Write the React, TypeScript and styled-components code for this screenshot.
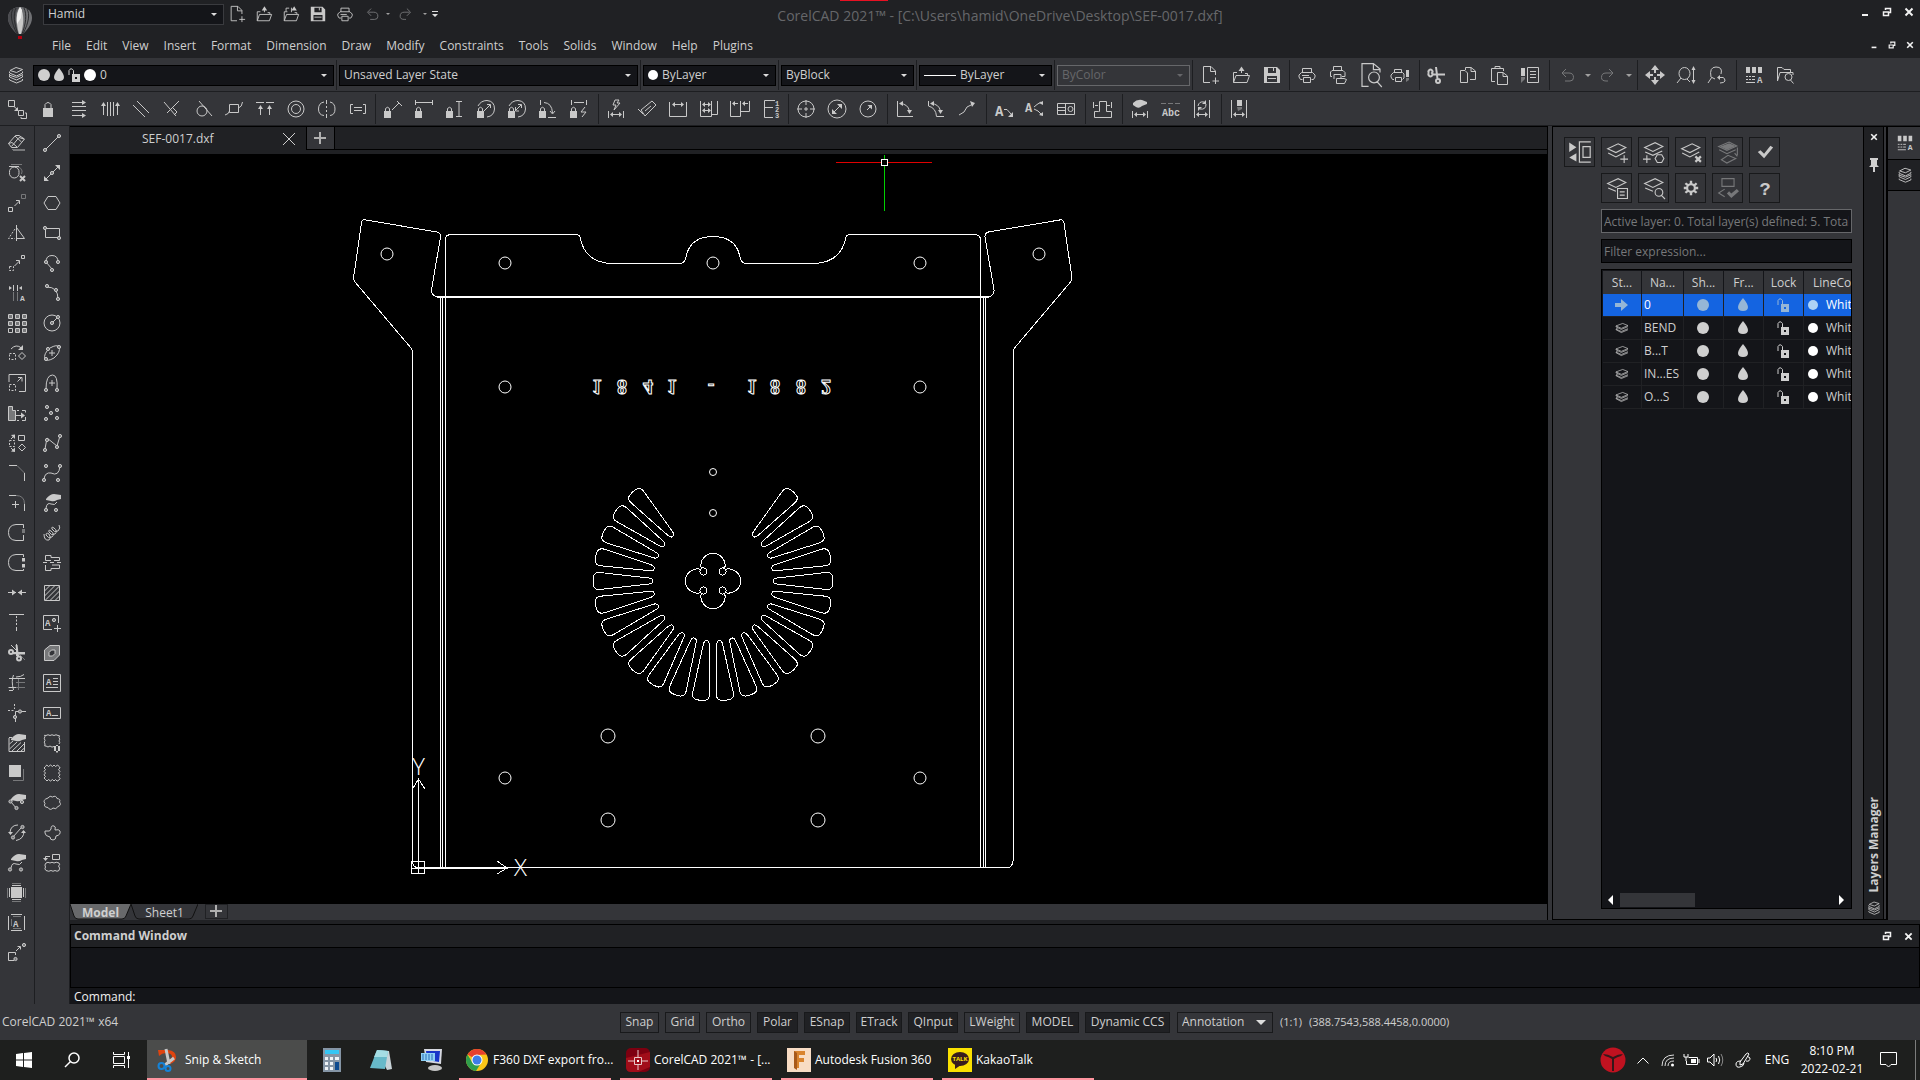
import React from "react";
import styled, { createGlobalStyle } from "styled-components";

const c = {
  dark: "#202124",
  bar: "#343539",
  field: "#141519",
  line: "#1d1e21",
  text: "#cfcfcf",
  dim: "#77787a",
  icon: "#c9c9c9",
  blue: "#1464e1",
};

const Global = createGlobalStyle`
  *, *::before, *::after { box-sizing: border-box; }
  html, body { margin: 0; background: ${c.dark}; }
  body, button, input, select, table {
    font-family: "Open Sans", "Noto Sans", sans-serif;
    font-size: 12px;
    line-height: 16px;
    color: ${c.text};
  }
  button { padding: 0; border: 0; background: none; cursor: default; }
  svg { display: block; flex: none; }
`;

/* ---------- icon set: 20 x 20 grid ---------- */

type Glyph = {
  d?: string; // light stroke
  w?: string; // heavy light stroke
  g?: string; // grey stroke
  f?: string; // light fill
  q?: string; // grey fill
  s?: string; // dashed stroke
  n?: number[][]; // nodes
  t?: [number, number, number, string][]; // letters
};

const HAND = "M4 6Q8 1 12 1L19 2V6L15 7Q12 9 9 8L4 7Z";
const LOCK = "M1 12H8V19H1Z";
const SHACKLE = "M2.5 12V9.5Q4.5 7 6.5 9.5V12";
const WAVY = "M3.5 3.5Q4.5 0.5 6.5 3.5Q8.5 0.5 10.5 3.5Q12 0.5 13.5 3.5Q16 0.5 17 3.5Q19.5 5 16.5 6.5Q19.5 8.5 16.5 10Q19.5 12 16.5 13.5Q19.5 16 17 17Q15 19.5 13.5 16.5Q12 19.5 10.5 16.5Q8.5 19.5 6.5 16.5Q5 19.5 3.5 16.5Q0.5 15 3.5 13.5Q0.5 12 3.5 10Q0.5 8.5 3.5 6.5Q0.5 5 3.5 3.5Z";
const PRINTER = "M5.5 7.5V3.5H14.5V7.5M5.5 14.5H3.5L2 12V10L4.5 7.5H15.5L18 10V12L16.5 14.5H14.5M6.5 12.5H13.5V17.5H6.5ZM5 10.5H12";
const STACK = "M4 5.5L10 2.5L16.5 4.5L10.5 7.5ZM3.500 6.500V8L10.5 11L16.5 8V6.5M3.500 10.500V12L10.5 15L16.5 12V10.5M3.500 14V15L10.5 18L16.5 15.5V14M4 9L3 10L10.500 12.500L17 9.500";
const NEWDOC = "M10 17.5H3.5V1.5H11L15.5 6V10M10.5 1.5V6.5H15.5M12.5 16H19M15.5 12.5V19";
const OPEN = "M2.5 17.5V7.5H6M2.5 17.5L5 10.5H18.5L16 17.5ZM16.5 10V8.5H14M10.5 8V3";
const UNDO = "M6 8H12Q16.5 8 16.5 12.5Q16.5 16 13 16H8";

const glyphs: Record<string, Glyph> = {
  erase: { d: "M1.5 10.5L8.5 2.5H12L17.500 6L10.5 14.5H4.5ZM4.5 13.5L12 4.500L17 6M1.500 10.500L5 9.500L10 14M8 3L14.500 9", g: "M5 16.5H18M6 17.5H18" },
  delDup: { d: "M12 9.5A4.8 4.8 0 1 1 2.5 9.5A4.8 4.8 0 1 1 12 9.5M2 3.5H12", g: "M4 1.5H15M8 4.5A4.8 4.8 0 0 1 14.5 11", w: "M13 13L18 18M18 13L13 18" },
  move: { d: "M1.5 14.5H5.5V18.5H1.5ZM7.5 13L12.5 8M9 7.5H12.5V11", g: "M14.5 1.5H18.5V5.5H14.5Z" },
  mirror: { d: "M9.5 2V18M9.5 4.5L17.5 15.5H9.5", s: "M8 6L1.5 15.5H8" },
  copy: { d: "M14.5 2.5H17.5V5.5H14.5ZM7.5 13L12.5 8M9 7.5H12.5V11", s: "M2.5 13.5H6.5V17.5H2.5Z" },
  space: { d: "M6.5 2V8M10.5 2V8", f: "M2 3L5 5L2 7ZM15 3L12 5L15 7Z", g: "M6.5 9V18M10.5 9V18", t: [[13, 18, 8, "A"]] },
  grid: { q: "M2 2H5V5H2ZM9 2H12V5H9ZM16 2H19V5H16ZM2 9H5V12H2ZM9 9H12V12H9ZM16 9H19V12H16ZM9 16H12V19H9ZM16 16H19V19H16Z", d: "M1.5 1.5H5.5V5.5H1.5ZM8.5 1.5H12.5V5.5H8.5ZM15.5 1.5H19.5V5.5H15.5ZM1.5 8.5H5.5V12.5H1.5ZM8.5 8.5H12.5V12.5H8.5ZM15.5 8.5H19.5V12.5H15.5ZM1.5 15.5H5.5V19.5H1.5ZM8.5 15.5H12.5V19.5H8.5ZM15.5 15.5H19.5V19.5H15.5Z" },
  rotate: { d: "M4 6Q9 0.5 14.5 5M15 9.5L18.5 13L15 16.5L11.5 13Z", f: "M16 2V7H11Z", s: "M2.5 10.5H8.5V16.5H2.5Z" },
  scale: { d: "M2 9V1.5H18.5V18.5H12M10.5 8.5L14.5 4.5M11 4.5H15V8.5", s: "M2.5 11.5H8.5V17.5H2.5Z" },
  stretch: { q: "M1.5 3.5H5.5V7.5H8.5V17.5H1.5Z", d: "M1.5 3.5H5.5V7.5H8.5V17.5H1.5ZM9 12.5H15M10 7.5H12M15 7.5H18.5V9.5M18.5 14V17.5H15M12 17.5H10", f: "M14 9.5L18 12.5L14 15.5Z" },
  transform: { d: "M11.5 2.5H17.5V7.5H11.5ZM15 11L18.5 14.5L15 18L11.5 14.5ZM4 6L7 3M4 15L7 18", f: "M8 1.5V6L4 2ZM8 19V14.5L4 18.5Z", s: "M2.5 7.5H7.5V13.5H2.5Z" },
  chamfer: { d: "M2 2.5H10M17.5 10V18", g: "M10 2.5L17.5 10" },
  fillet: { d: "M2 2.5H9M17.5 11V18M5 11.5H12M8.5 8V15", g: "M9 2.5Q17.5 2.5 17.5 11" },
  arcC: { d: "M16.5 5V1.5H9Q1.5 2 1.5 9.5Q1.5 17 9 17.5H16.5V12", q: "M15 6H18V10H15Z" },
  arcC2: { d: "M16.5 4V1.5H9Q1.5 2 1.5 9.5Q1.5 17 9 17.5H16.5V16", f: "M15 5H18V8.5H15ZM15 11H18V14.5H15Z" },
  join: { d: "M1 9.5H9M11 9.5H19", f: "M5 6.5L9 9.5L5 12.5ZM15 6.5L11 9.5L15 12.5Z" },
  tee: { d: "M2 1.5H17M9.5 14V18", s: "M9.5 3V13" },
  trim: { d: "M9.5 1V13M18 9.5H6M4 2L10 8", w: "M2 9A2 2 0 1 0 6 9A2 2 0 1 0 2 9M10 15.5A2 2 0 1 0 14 15.5A2 2 0 1 0 10 15.5M5 10L18 10.5M9.5 2L11 14", g: "M12 11L18 17" },
  power: { d: "M2 5.5H18M6.5 2Q4 8 6.5 17M1.5 14.5H9M2 17.5H6M9 4Q14 4 17 1.5", g: "M11.5 5V17M9 9.5H18M8 14.5H18" },
  corner: { d: "M8.5 19V8.5H19", s: "M1 7.5H7M7.5 1V6", n: [[13, 8.5], [8, 14]] },
  hatchEdit: { d: "M2 5V18.5H17.5V9M2.5 11L6 8M2.5 16L10 9M5 18L14 9.5M10 18L17 11M14 18L17.5 15M2 4.5H5", f: HAND },
  shadow: { f: "M2 2H14V14H2Z", g: "M16.5 6V17.5H6" },
  handPoly: { d: "M4 9L10 16M4 8L8 5", n: [[3.5, 8.5], [9.5, 15], [15, 9]], f: HAND },
  rotPoly: { d: "M3 9Q4 2 11 2M17 8Q17 16 9 17.5M6 14L14 5", n: [[6, 14.5], [15.5, 4]], f: "M1 9H6L3.5 12ZM14 10H19L16.5 7Z" },
  handSpl: { d: "M4 15Q5 9 9 11Q13 13 15 9", n: [[3, 16.5], [14, 16.5]], f: HAND },
  frontSq: { f: "M4 4H15V15H4Z", d: "M5 2.5H14M5 16.5H14M2.5 5V14M16.5 5V14", g: "M0.5 5V15M18.5 5V15M5 0.5H14M5 18.5H14" },
  frontA: { d: "M1.5 3V17M17.5 3V17M4 1.5H15M4 17.5H15", g: "M6 3.5H14M6 15.5H14M4.5 6V13", t: [[6, 14, 9, "A"]] },
  copyNode: { d: "M7 17.5H1.5V9.5H8.5V12M9 8L13 4M10.5 3.5H13.5V6.5", n: [[8.5, 16], [17, 2]] },
  line: { d: "M3 17L17 3", n: [[3, 17], [17, 3]] },
  ray: { d: "M3 17L17 3", f: "M18 2V7L13 2ZM2 18V13L7 18Z", n: [[10, 10]] },
  hexagon: { d: "M6 3.5H14L18 10L14 16.5H6L2 10Z" },
  rect: { d: "M3.5 5.5H17.5V14.5H3.5Z", n: [[3, 5], [17, 15]] },
  arc: { d: "M4 9Q4 2.5 10 2.5Q16 2.5 16 9M4 9L10 16", n: [[4, 9], [16, 9], [10, 17]] },
  arc3: { d: "M5 4Q16 4 16 16", n: [[5, 3], [14, 7], [16, 16]] },
  circle: { d: "M2 10A8 8 0 1 0 18 10A8 8 0 1 0 2 10M10 10L16 4", n: [[10, 10], [16, 4]] },
  ellipse: { d: "M3 16Q1 11 8 5Q15 1 17 4Q19 9 12 15Q5 19 3 16M10 7V13M7 10H13", n: [[4, 16], [17, 4], [6, 6]] },
  ellArc: { d: "M4 16Q4 2 10.5 2Q16 2 15 16M10 7V13M7 10H13", n: [[4, 17], [15, 17]] },
  points: { n: [[5, 4], [15, 7], [9, 10], [4, 16], [15, 15]] },
  poly: { d: "M3 16L5 5L15 13L18 3", n: [[3, 17], [5, 7], [15, 14], [18, 3]] },
  spline: { d: "M2 16Q3 9 9 10Q17 14 18 3", n: [[2, 17], [4, 3], [16, 17], [18, 3]] },
  handSp2: { d: "M4 15Q5 9 9 11Q13 13 15 9", n: [[4, 17], [14, 17]], f: HAND },
  spiral: { d: "M2 11Q2 18 7 17Q10 15 7 11Q4 9 4 12Q6 16 10 14Q13 11 9 8Q6 6 7 9Q9 13 13 11Q16 8 12 5Q9 3 10 6Q12 10 16 8Q19 5 17 2" },
  split: { d: "M9 7.5H3.5V2.5H9V4.5H17.5V7.5H12M3.5 12V17.5H9V15.5H17.5V12H10M1 9.5H5M8 9.5H12M15 9.5H19" },
  hatch: { d: "M2.5 2.5H17.5V17.5H2.5ZM2.5 8L8 2.5M2.5 13L13 2.5M3.5 17L17.5 3M8 17.5L17.5 8M13 17.5L17.5 13" },
  attr: { d: "M10 16.5H1.5V2.5H16.5V10M12 15.5H19M15.5 12V19", n: [[12, 7]], t: [[3, 13, 9, "A"]] },
  region: { q: "M2.5 17.5V7L8 2.5H17.5V12L12 17.5ZM7 13H10.500L13 10.500V7H9.500L7 9.500Z", d: "M2.5 17.5V7L8 2.5H17.5V12L12 17.5ZM7 13V9.5L9.5 7H13V10.5L10.5 13Z" },
  text: { d: "M1.5 1.5H18.5V18.5H1.5ZM11 5.5H16M11 8.5H16M11 11.5H16M4 14.5H16", t: [[4, 12, 9, "A"]] },
  textA: { d: "M1.5 4.5H18.5V15.5H1.5ZM10 12.5H16", t: [[4, 13, 9, "A"]] },
  cloudSet: { d: "M12 13.5Q10 15 8 13Q6 15 4 13Q2 14 3 11Q1.5 9 3 7.5Q1.5 5 3 3.5Q1.5 1.5 4 2.5Q6 1 8 2.5Q10 1 12 2.5Q14 1 16 2.5Q18.5 2 17 4.5Q18.5 6 17 8Q18.5 9.5 17 11", f: "M12 13H18V18H12ZM14 12H16V19.5H14Z" },
  cloudRect: { d: WAVY },
  cloudEll: { d: "M6 5Q8 2 10.5 4Q14 2 15 5.5Q19 6 17.5 9Q20 12 16 13.5Q14 17 11 15Q8 18 6 14.5Q1 14 3 10.5Q0 7 6 5Z" },
  cloudFree: { d: "M9 6Q9 2 12 3Q14 3 13 7Q17 6 18 8Q19 12 14 13Q14 17 11 17Q8 17 8 14Q3 13 3 10Q2 7 5 8Q8 9 9 6Z" },
  cloudCvt: { d: "M10.5 1.5H17.5V6.5H10.5ZM3.5 7V3.5H8M4 10Q6 8.5 8 10Q10 8.5 12 10Q14 8.5 17 10Q18.5 12 16.5 13Q18.5 15 17 17.5Q15 19 13 17.5Q11 19 9 17.5Q7 19 4 17.5Q2 16 3.5 14Q2 12 4 10Z", f: "M1 5H6L3.5 8Z" },
  /* constraint + dimension toolbar */
  coin: { d: "M1.5 1.5H7.5V7.5H1.5ZM11.5 11.5H16.5V16.5H11.5ZM18 14H19.5V19.5H14V18M7 7.5L11 11", f: "M11 8V12H7Z" },
  lock: { f: "M5 9H15V18H5Z", d: "M7 9V5.5Q10 1.5 13 5.5V9" },
  parH: { d: "M3 3.5H14M3 7.5H17M3 11.5H17M3 16.5H14", f: "M13 1L17 3.5L13 6ZM13 14L17 16.5L13 19Z" },
  parV: { d: "M3.5 6V16M7.5 3V17M10.5 3V17M13.5 3V17M17.5 6V16", f: "M1 7L3.5 3L6 7ZM15 7L17.5 3L20 7Z" },
  parallel: { d: "M2 6L14 18M6 2L18 14" },
  perp: { d: "M2 3L14 17M17 2L5 14M11 9L15 13L12 16" },
  tangent: { d: "M4 12A5 5 0 1 0 14 12A5 5 0 1 0 4 12M6 2L19 17" },
  smooth: { d: "M5.5 5.5H14.5V13.5H5.5ZM1 16Q5 15 5.5 12M14.5 9Q18 8 18.5 3" },
  vert: { d: "M1 3.5H9M11 3.5H19M5.5 7V16M14.5 7V16", f: "M3 10L5.5 6L8 10ZM12 10L14.5 6L17 10Z" },
  conc: { d: "M2 10A8 8 0 1 0 18 10A8 8 0 1 0 2 10M5.5 10A4.5 4.5 0 1 0 14.5 10A4.5 4.5 0 1 0 5.5 10" },
  sym: { d: "M9.5 1V5M9.5 7V9M9.5 11V13M9.5 15V19M7 3Q1.5 4 1.5 10Q1.5 16 7 16.5M13 3Q18 4 18 10Q18 16 13 16.5" },
  equal: { d: "M5 5.5H2.5V14.5H5M15 5.5H17.5V14.5H15M6 8.5H14M6 11.5H14" },
  dcAl: { f: LOCK, d: SHACKLE + "M9 11L16 4M14 2L19 7" },
  dcH: { f: LOCK, d: SHACKLE + "M1.5 1V6M18.5 1V6M2 3.5H18" },
  dcV: { f: LOCK, d: SHACKLE + "M11 2.5H17M11 17.5H17M14 3V17" },
  dcR: { f: LOCK, d: SHACKLE + "M2 7Q5 1.5 11 1.5Q18.5 2 18.5 10Q18 17 11 18M8 12L14 6M11 5.5H14.5V9" },
  dcD: { f: LOCK, d: SHACKLE + "M2 7Q5 1.5 11 1.5Q18.5 2 18.5 10Q18 17 11 18M9 11L14 6M11 5.5H14.5V9M8.5 8V12H12" },
  dcAn: { f: LOCK, d: SHACKLE + "M2.5 1V6M10 18.5H18M6 3.5Q14 4 14.5 14M12 12L14.5 15L17 12" },
  dcCv: { f: LOCK, d: SHACKLE + "M2.5 1V6M17.5 1V6M5 3.5H15M16 8L12 13H17L13 18", q: "" },
  smart: { d: "M2.5 12V19M17.5 12V19M5 15.5H15M9 1L7 6H10L8 11L14 4H11L13 1Z", f: "M7 13V18L4 15.5ZM13 13V18L16 15.5Z" },
  dAl: { d: "M4 11L15 2L19 6L8 17ZM8 12L14 7M1 10L6 15" },
  dLin: { d: "M1.5 3V17.5H18.5V3M5 5.5H15", f: "M7 3V8L4 5.5ZM13 3V8L16 5.5Z" },
  dBase: { d: "M1.5 2V17.5H12.5V2M12.5 15.5H18.5V2M4 5.5H10M4 11.5H10", f: "M6 3V8L3 5.5ZM9 3V8L12 5.5ZM6 9V14L3 11.5ZM9 9V14L12 11.5Z" },
  dCont: { d: "M0.5 2V17.5H10.5V2M10.5 12.5H19.5V2M3 4.5H8M13 4.5H18", f: "M5 2V7L2 4.5ZM15 2V7L12 4.5Z" },
  dOrd: { d: "M14 1.5H3.5V18.5H12M4 8.5H12", t: [[14, 7, 7, "1"], [14, 13, 7, "2"], [14, 19, 7, "3"]] },
  center: { d: "M2 10A8 8 0 1 0 18 10A8 8 0 1 0 2 10M10 1V6M10 14V19M1 10H6M14 10H19M10 8V12M8 10H12" },
  diam: { d: "M1 10A9 9 0 1 0 19 10A9 9 0 1 0 1 10M7 13L13 7", f: "M15 5V10L10 5ZM5 15V10L10 15Z" },
  radius: { d: "M2 10A8 8 0 1 0 18 10A8 8 0 1 0 2 10M9 11L13 7", f: "M14 6V10.5L9.5 6Z" },
  angle: { d: "M2.5 2V17.5H18M5 4.5Q13 5 14.5 12", f: "M8 2V7L4 4.5ZM12 11H17L14.5 15Z" },
  arcLen: { d: "M2.5 2V7Q10 9 10.5 17.5H18M5 4.5Q13 5 14.5 12", f: "M8 2V7L4 4.5ZM12 11H17L14.5 15Z" },
  jog: { d: "M2 16L7 13L10 8L16 5", f: "M13 2L18 4L15 8Z" },
  leader: { d: "M10 10.5H13L17 15", f: "M19 13V18H14Z", t: [[1, 17, 14, "A"]] },
  leader2: { d: "M9 8L12 5.5L16 3M9 10L13 12L16 15", f: "M18 2V6L14 4ZM18 17V13L14 16Z", t: [[0, 13, 12, "A"]] },
  tol: { d: "M1.5 4.5H18.5V15.5H1.5ZM9.5 4.5V15.5M2 8.5H9M2 11.5H9M12 10A2.5 2.5 0 1 0 17 10A2.5 2.5 0 1 0 12 10" },
  qdim: { d: "M0.5 3V9M18.5 3V9M5.5 12.5H1.5V18.5H18.5V12.5H13.5V2.5H6.5V12.5ZM2 6.5H5M14 6.5H17" },
  handDim: { f: "M3 4Q7 0 12 1L17 3V5L12 7Q9 10 6 8L3 6ZM7 13V18L4 15.5ZM13 13V18L16 15.5Z", d: "M2.5 12V19M17.5 12V19M5 15.5H15" },
  abc: { g: "M0 4.5H5M7 4.5H12M14 4.5H19", t: [[1, 17, 10, "Abc"]] },
  upd: { d: "M2.5 1V19M17.5 1V19M5 15.5H15M6 7Q7 2 12 3M14 5Q14 11 8 10", f: "M7 13V18L4 15.5ZM13 13V18L16 15.5ZM14 1V5H10ZM6 12V8H10Z" },
  brushDim: { d: "M2.5 1V19M17.5 1V19M5 15.5H15", f: "M8 1H13V7H8ZM7 13V18L4 15.5ZM13 13V18L16 15.5Z", q: "M8 8H13V10L9 12Z" },
  /* standard toolbar */
  layers: { d: STACK },
  newDoc: { d: NEWDOC },
  open: { d: OPEN, f: "M7.5 6L10.5 1.5L13.5 6Z" },
  open2: { d: OPEN + "M4.5 7V3.5H8", f: "M10.5 6L13.5 1.5L16.5 6Z" },
  save: { f: "M2 2H15L18 5V18H2ZM6 3V8H14V3ZM5 11V17H15V11Z", d: "M11.5 3V6M6 13.5H14" },
  print: { d: PRINTER },
  printB: { d: "M5.5 5.5V1.5H13.5V5.5M4 11.5H2.5V7L4 5.5H15L17 7.5V11.5H14M6 9.5H13V13M6 9.5V14M8.5 18.5V13.5H16L18.5 14.5L16.5 18.5Z" },
  preview: { d: "M8 19.5H2.5V0.5H12L17.5 5V8M12 0.5V5.5H17M8 12A4.5 4.5 0 1 0 17 12A4.5 4.5 0 1 0 8 12M15 15.5L19 20" },
  printBrush: { d: "M4.5 7.5V4.5H11.5V7.5M4 14.5H2.5L1 12V10L3.5 7.5H12.5L14 9V13L12.5 14.5M5.5 12.5H11.5V16.5H5.5Z", f: "M16 5H19V12H16Z", q: "M16 13H19V15L16 17Z" },
  cut: { w: "M9 2L10.5 14M18 9.5H5M2 8A2 2 0 1 0 5 8A2 2 0 1 0 2 8M9 16A2 2 0 1 0 13 16A2 2 0 1 0 9 16" },
  copyDoc: { d: "M7 17.5H2.5V5.5H7L9.5 8V17.5ZM7.5 5V2.5H13L17.5 6V14.5H12M13 2.5V6.5H17" },
  paste: { d: "M6 16.5H2.5V3.5H14.5V6M6 3V1.5H11V3M8.5 7.5H14L18.5 11V19.5H8.5ZM14 8V11.5H18" },
  brush: { f: "M1 3H5V11H1Z", q: "M1 12H5V14L1 18Z", d: "M7.5 2.5H18.5V17.5H7.5ZM10 6.5H16M10 9.5H16M10 12.5H16" },
  undo: { g: UNDO + "M9 4L5 8L9 12" },
  redo: { g: "M14 8H8Q3.5 8 3.5 12.5Q3.5 16 8 16H10M11 4L15 8L11 12" },
  pan: { f: "M10 0L14 5H11V8H9V5H6ZM10 20L14 15H11V12H9V15H6ZM0 10L5 6V9H8V11H5V14ZM20 10L15 6V9H12V11H15V14Z" },
  zoomDyn: { d: "M3 8.5A5.5 6 0 1 0 14 8.5A5.5 6 0 1 0 3 8.5M5 13L1 18M17.5 2V17M11 14L14 17", f: "M15.5 5L17.5 1L19.5 5ZM15.5 15L17.5 19L19.5 15Z" },
  zoomPrev: { d: "M4 12Q2 2 9 2Q16 2 14 9M5 12L1 18M5 12.5L8 14M12 12.5H16Q18 13 18 16Q17 18 13 18", f: "M13 10V15L10 12.5Z" },
  props: { f: "M2 2H6V8H2ZM8 2H12V8H8ZM14 2H18V8H14Z", d: "M2 11.5H4M5 11.5H7M8 11.5H11M2 14.5H4M5 14.5H7M8 14.500H11M2 17.5H11", t: [[13, 18, 9, "A"]] },
  folderZ: { d: "M2.5 16V2.5H7L9 4.5H15.5V7M2.5 16L5 7.5H18V10M10 12A3 3 0 1 0 17 12A3 3 0 1 0 10 12M15.5 15L18.5 18.5" },
  /* layer panel */
  collapse: { d: "M19 1.5H9.5V18.5H19M12.5 5.5H18.5V14.5H12.5Z", f: "M1 2L7 6L1 10ZM7 11V18L1 14.5Z" },
  layAdd: { d: "M1.5 7L11 2.5L18 6L9 10.5ZM2 11L9 14.5L17.5 10M13 16.5H20M16.5 13V20" },
  layAddO: { d: "M1.5 6L11 1.5L18 5L9 9.5ZM2 10L9 13L17.5 9M0 16.5H7M3.5 13V20M13 12.5H17L19 16L17 19.5H13L11 16Z" },
  layDel: { d: "M1.5 7L11 2.5L18 6L9 10.5ZM2 11L9 14.5L17.5 10", w: "M14 14L19 19M19 14L14 19" },
  layMerge: { g: "M1.5 5L11 1L18 4.5L9 8.5ZM2 8L9 11.5L17 8M4 17L10 13L17 16L9 20ZM18.5 6V13M16 11L18.5 14", q: "M3 5L11 2L17 4.5L9 8Z" },
  check: { f: "M2 10L5 8L9 12L16 3L19 5L9 17Z" },
  layList: { d: "M1.5 6L11 1.5L18 5L9 9.5ZM2 10L9 13M10.5 10.5H19.5V19.5H10.5ZM12.5 13.5H17M12.5 16.5H17" },
  layFind: { d: "M1.5 6L11 1.5L18 5L9 9.5ZM2 10L9 13M11 14A3.5 3.5 0 1 0 18 14A3.5 3.5 0 1 0 11 14M17 17L20 20" },
  layRow: { d: "M1.5 7L11 3.5L18.5 6.5L9 10.5ZM1.5 11.5L9 15L18.5 11M1.5 7V8.5L9 12L18.5 8M1.5 11.5L4 10M1.5 11.5V12.5L9 16.5L18.5 12.5" },
  gear: { f: "M8.5 1H11.5V4L14 5L16 3L18 5L15.500 7.500L16 8.500H19V11.500H16L15.500 13L18 15L16 17L13.500 15L11.500 16V19H8.500V16L6.500 15L4 17L2 15L4.500 13L4 11.500H1V8.500H4L4.500 7L2 5L4 3L6.500 5L8.500 4ZM10 6.500A3.500 3.500 0 1 0 10 13.500A3.500 3.500 0 1 0 10 6.500Z" },
  selCheck: { g: "M4.5 1.5H15.5V8.5H4.5ZM7 11L1.5 14.5L7 18", q: "M9 15L11 13L13 15L18 11L20 13L13 19Z" },
  help: { t: [[5, 16, 17, "?"]] },
};

const Letter = styled.text`
  font-family: "Liberation Mono", monospace;
  font-weight: 700;
`;

function Icon({ name, color = c.icon, size = 20 }: { name: string; color?: string; size?: number }) {
  const g = glyphs[name];
  return (
    <svg width={size} height={size} viewBox="0 0 20 20" fill="none" stroke={color} strokeWidth="1" overflow="visible" aria-hidden="true">
      {g.q && <path d={g.q} fill="#77787a" stroke="none" fillRule="evenodd" />}
      {g.g && <path d={g.g} stroke="#77787a" />}
      {g.s && <path d={g.s} strokeDasharray="2 1.5" />}
      {g.d && <path d={g.d} />}
      {g.w && <path d={g.w} strokeWidth="2" />}
      {g.f && <path d={g.f} fill={color} stroke="none" fillRule="evenodd" />}
      {g.n && g.n.map(([x, y], i) => <circle key={i} cx={x} cy={y} r="1.6" fill="#77787a" />)}
      {g.t && g.t.map(([x, y, s, str], i) => (
        <Letter key={i} x={x} y={y} fontSize={s} fill={color} stroke="none">{str}</Letter>
      ))}
    </svg>
  );
}

const Caret = ({ color = "#dddddd", w = 6 }: { color?: string; w?: number }) => (
  <svg width={w} height={w / 2} viewBox="0 0 6 3" aria-hidden="true"><path d="M0 0H6L3 3Z" fill={color} /></svg>
);

const Disc = ({ color, size = 12 }: { color: string; size?: number }) => (
  <svg width={size} height={size} viewBox="0 0 12 12" aria-hidden="true"><circle cx="6" cy="6" r="6" fill={color} /></svg>
);
const Drop = ({ color = "#cfcfcf" }) => (
  <svg width="10" height="14" viewBox="0 0 10 14" aria-hidden="true"><path d="M5 0Q10 6 10 9Q10 13 5 13Q0 13 0 9Q0 6 5 0Z" fill={color} /></svg>
);
const Unlock = ({ color = "#cfcfcf" }) => (
  <svg width="12" height="14" viewBox="0 0 12 14" aria-hidden="true">
    <path d="M1 7V2.5Q3 -1 5.5 2.5V6" fill="none" stroke={color} />
    <path d="M4 6H12V14H4ZM7 9V11H9V9Z" fill={color} fillRule="evenodd" />
  </svg>
);

const WinGlyph = ({ kind, size = 10 }: { kind: "min" | "restore" | "close"; size?: number }) => (
  <svg width={size} height={size} viewBox="0 0 10 10" fill="none" stroke="#f2f2f2" strokeWidth="2" aria-hidden="true">
    {kind === "min" && <path d="M2 8H8" />}
    {kind === "close" && <path d="M1.5 1.5L8.5 8.5M8.5 1.5L1.5 8.5" />}
    {kind === "restore" && <path d="M3.5 3V1.5H8.5V5.5H7M1.5 5H6.5V8.5H1.5Z" strokeWidth="1.5" />}
  </svg>
);

/* ---------- frame ---------- */

const Shell = styled.div`
  display: flex;
  flex-direction: column;
  min-height: 100vh;
  background: ${c.dark};
`;

const Header = styled.header`
  position: relative;
  display: flex;
  height: 58px;
`;
const TopMark = styled.span`
  position: absolute;
  top: 0;
  left: 840px;
  width: 48px;
  height: 1px;
  background: #e81123;
`;
const LogoBox = styled.div`
  width: 43px;
  padding: 6px 0 0 8px;
`;
const HeaderBody = styled.div`
  flex: 1;
  min-width: 0;
`;
const TitleRow = styled.div`
  display: grid;
  grid-template-columns: 1fr auto 1fr;
  height: 32px;
`;
const QuickBar = styled.div`
  display: flex;
  align-items: center;
  height: 28px;
`;
const Title = styled.h1`
  margin: 0 0 0 37px;
  font-size: 14px;
  line-height: 32px;
  font-weight: 400;
  color: #66676a;
  white-space: nowrap;
`;
const WinButtons = styled.div<{ $gap: number; $right?: number }>`
  display: flex;
  justify-content: flex-end;
  align-items: center;
  gap: ${p => p.$gap}px;
  height: 24px;
  margin-left: auto;
  padding-right: ${p => p.$right ?? 6}px;
`;
const MenuRow = styled.nav`
  display: flex;
  align-items: center;
  height: 26px;
  padding-left: 1px;
`;
const MenuItem = styled.button`
  padding: 2px 7px 0 8px;
  height: 24px;
`;

/* ---------- toolbars ---------- */

const Bar = styled.div<{ $h: number }>`
  display: flex;
  height: ${p => p.$h}px;
  background: ${c.bar};
  border-bottom: 1px solid ${c.line};
`;
const Group = styled.div<{ $first?: boolean; $tight?: boolean }>`
  display: flex;
  align-items: center;
  margin: 2px 0 1px;
  padding: 0 ${p => (p.$tight ? 1 : 3)}px 0 2px;
  border-left: ${p => (p.$first ? 0 : 1)}px solid ${c.line};
`;
const ToolButton = styled.button<{ $w?: number }>`
  display: flex;
  align-items: center;
  justify-content: flex-start;
  width: ${p => p.$w ?? 31}px;
  height: 30px;
  padding-left: ${p => (p.$w ? 4 : 5)}px;
`;
const CaretButton = styled.button`
  display: flex;
  align-items: center;
  justify-content: center;
  width: 10px;
  height: 30px;
`;
const ComboSlot = styled.div`
  display: flex;
  align-items: center;
  margin: 2px 0 1px;
  padding: 0 2px;
  border-right: 1px solid ${c.line};
`;
const Combo = styled.div<{ $w: number; $off?: boolean; $frame?: string }>`
  display: flex;
  align-items: center;
  gap: 4px;
  width: ${p => p.$w}px;
  height: 21px;
  padding: 0 6px 0 4px;
  background: ${p => (p.$off ? c.bar : c.field)};
  border: 1px solid ${p => p.$frame ?? (p.$off ? "#66676a" : "#000")};
`;
const Select = styled.select<{ $off?: boolean }>`
  flex: 1;
  min-width: 0;
  height: 18px;
  padding: 0;
  border: 0;
  background: transparent;
  appearance: none;
  opacity: 1;
  color: ${p => (p.$off ? "#66676a" : c.text)};
`;

const group2 = [
  ["coin", "lock", "parH", "parV", "parallel", "perp", "tangent", "smooth", "vert", "conc", "sym", "equal"],
  ["dcAl", "dcH", "dcV", "dcR", "dcD", "dcAn", "dcCv"],
  ["smart", "dAl", "dLin", "dBase", "dCont", "dOrd"],
  ["center", "diam", "radius"],
  ["angle", "arcLen", "jog"],
  ["leader", "leader2", "tol"],
  ["qdim"],
  ["handDim", "abc", "upd"],
  ["brushDim"],
];

const Tools = ({ names }: { names: string[] }) => (
  <>{names.map(n => <ToolButton key={n} aria-label={n}><Icon name={n} size={n === "preview" ? 24 : 20} /></ToolButton>)}</>
);

/* ---------- body ---------- */

const Main = styled.main`
  display: flex;
  flex: 1;
`;
const Rail = styled.div`
  width: 35px;
  padding: 2px 0 0 2px;
  background: ${c.bar};
  border-right: 1px solid ${c.line};
`;
const Work = styled.div`
  display: flex;
  flex-direction: column;
  flex: 1;
  min-width: 0;
`;
const Upper = styled.div`
  display: flex;
  flex: 1;
  min-height: 0;
`;
const Doc = styled.section`
  display: flex;
  flex-direction: column;
  flex: 1;
  min-width: 0;
  margin-right: 4px;
  border-right: 1px solid #000;
  box-shadow: 4px 0 0 ${c.bar};
`;
const DocTabs = styled.div`
  display: flex;
  height: 24px;
  border-top: 1px solid #000;
`;
const DocTab = styled.div`
  display: flex;
  align-items: center;
  justify-content: space-between;
  width: 236px;
  padding: 0 10px 0 72px;
`;
const AddDoc = styled.button`
  display: flex;
  align-items: center;
  justify-content: center;
  width: 29px;
  background: ${c.bar};
  border: solid #000;
  border-width: 0 1px 1px;
`;
const TabFill = styled.div`
  flex: 1;
  border-bottom: 1px solid #000;
`;
const Canvas = styled.div`
  flex: 1;
  margin-top: 4px;
  background: #000;
  overflow: hidden;
`;
const Drawing = styled.svg`
  width: 100%;
  height: 100%;
`;
const SheetTabs = styled.div`
  display: flex;
  height: 16px;
  background: ${c.bar};
`;
const SheetTab = styled.button<{ $on?: boolean; $w: number }>`
  position: relative;
  width: ${p => p.$w}px;
  height: 16px;
  padding-top: 1px;
  font-weight: ${p => (p.$on ? 700 : 400)};
  svg { position: absolute; inset: 0; width: 100%; height: 100%; }
  span { position: relative; }
`;
const AddSheet = styled.button`
  display: flex;
  align-items: center;
  justify-content: center;
  width: 23px;
  height: 15px;
  margin-left: 7px;
  border: 1px solid ${c.dark};
`;

const Command = styled.section`
  border-top: 4px solid ${c.dark};
  background: ${c.field};
`;
const CommandHead = styled.div`
  display: flex;
  align-items: center;
  height: 24px;
  padding-left: 3px;
  border: 1px solid #000;
  background: ${c.dark};
  font-weight: 700;
`;
const CommandLog = styled.div`
  height: 40px;
  border: solid #000;
  border-width: 0 1px 1px;
`;
const CommandLine = styled.label`
  display: flex;
  height: 16px;
  padding-left: 4px;
  line-height: 17px;
  color: #f0f0f0;
`;
const CommandInput = styled.input`
  flex: 1;
  border: 0;
  outline: 0;
  padding: 0 4px;
  background: transparent;
`;

/* ---------- layers panel ---------- */

const Panel = styled.aside`
  display: flex;
  border: 1px solid #000;
  background: ${c.bar};
`;
const PanelBody = styled.div`
  display: flex;
  gap: 6px;
  width: 310px;
  padding: 10px 11px;
`;
const PanelMain = styled.div`
  display: flex;
  flex-direction: column;
  gap: 6px;
  width: 251px;
`;
const ButtonRow = styled.div`
  display: flex;
  gap: 6px;
`;
const PanelButton = styled.button`
  display: flex;
  align-items: center;
  justify-content: center;
  width: 31px;
  height: 30px;
  border: 1px solid #18191b;
`;
const PanelField = styled.input<{ $frame: string }>`
  width: 100%;
  height: 24px;
  padding: 0 2px;
  border: 1px solid ${p => p.$frame};
  background: ${c.field};
  color: ${c.dim};
  outline: 0;
  &::placeholder { color: ${c.dim}; opacity: 1; }
`;
const TableBox = styled.div`
  display: flex;
  flex-direction: column;
  flex: 1;
  padding: 1px;
  border: 1px solid #000;
  background: ${c.field};
  overflow: hidden;
`;
const Table = styled.table`
  width: 301px;
  table-layout: fixed;
  border-collapse: separate;
  border-spacing: 0;
`;
const Th = styled.th<{ $w: number; $left?: boolean }>`
  width: ${p => p.$w}px;
  height: 23px;
  padding: 0 ${p => (p.$left ? 9 : 0)}px;
  background: ${c.bar};
  border-right: 1px solid #141519;
  font-weight: 400;
  text-align: ${p => (p.$left ? "left" : "center")};
  white-space: nowrap;
`;
const Tr = styled.tr<{ $on?: boolean }>`
  background: ${p => (p.$on ? c.blue : "transparent")};
  color: ${p => (p.$on ? "#fff" : c.text)};
`;
const Td = styled.td`
  height: 23px;
  padding: 0 3px 0 2px;
  border-right: 1px solid ${c.dark};
  border-bottom: 1px solid ${c.dark};
  white-space: nowrap;
  svg { margin: 0 auto; }
`;
const ColorCell = styled.span`
  display: flex;
  align-items: center;
  gap: 8px;
  padding-left: 2px;
  svg { margin: 0; }
`;
const Scroll = styled.div`
  display: flex;
  align-items: center;
  justify-content: space-between;
  height: 14px;
  margin-top: auto;
  padding: 0 6px 0 5px;
`;
const Thumb = styled.div`
  width: 75px;
  height: 14px;
  margin: 0 auto 0 7px;
  background: ${c.bar};
`;
const PanelTitle = styled.div`
  display: flex;
  flex-direction: column;
  align-items: center;
  gap: 17px;
  width: 24px;
  padding: 6px 2px 3px 0;
  background: ${c.dark};
  border: solid #000;
  border-width: 0 1px;
  box-shadow: inset -2px 0 0 ${c.bar}, inset -3px 0 0 #000;
`;
const PanelName = styled.h2`
  margin: auto 0 -9px;
  font-size: 12px;
  line-height: 16px;
  writing-mode: vertical-rl;
  rotate: 180deg;
`;
const SideTabs = styled.div`
  width: 32px;
  background: ${c.bar};
  border-top: 1px solid #000;
`;
const SideTab = styled.button<{ $on?: boolean }>`
  display: flex;
  align-items: center;
  justify-content: center;
  width: 32px;
  height: 32px;
  padding-left: 2px;
  background: ${p => (p.$on ? c.dark : c.bar)};
  border: solid #000;
  border-width: ${p => (p.$on ? 1 : 0)}px 0;
`;

const layers = ["0", "BEND", "B...T", "IN...ES", "O...S"];

/* ---------- status bar ---------- */

const Status = styled.footer`
  display: flex;
  align-items: center;
  height: 36px;
  background: ${c.bar};
`;
const Product = styled.span`
  width: 620px;
  padding-left: 2px;
`;
const Modes = styled.div`
  display: flex;
  gap: 6px;
  margin-right: 7px;
`;
const Mode = styled.button<{ $w: number; $on?: boolean }>`
  width: ${p => p.$w}px;
  height: 21px;
  border: 1px solid #18191b;
  background: ${p => (p.$on ? c.dark : "transparent")};
`;
const Readout = styled.span`
  margin-left: 7px;
  font-size: 11px;
`;

/* ---------- task bar ---------- */

const Taskbar = styled.div`
  display: flex;
  height: 40px;
  background: #1e1f1e;
  color: #fff;
`;
const TaskIcon = styled.button<{ $w: number }>`
  display: flex;
  align-items: center;
  justify-content: center;
  width: ${p => p.$w}px;
`;
const TaskApp = styled.button<{ $w: number; $on?: boolean }>`
  display: flex;
  align-items: center;
  gap: 4px;
  width: ${p => p.$w}px;
  margin-right: ${p => (p.$on ? 0 : 9)}px;
  padding: 2px 0 0 ${p => (p.$on ? 10 : 6)}px;
  border-bottom: 2px solid #ff949f;
  background: ${p => (p.$on ? "#4b4c4b" : "transparent")};
  color: #fff;
  white-space: nowrap;
`;
const Tray = styled.div`
  display: flex;
  align-items: center;
  margin-left: auto;
`;
const TraySlot = styled.button<{ $w: number }>`
  display: flex;
  align-items: center;
  justify-content: center;
  width: ${p => p.$w}px;
  color: #fff;
`;
const Clock = styled.div`
  width: 74px;
  text-align: center;
  line-height: 18px;
`;
const Edge = styled.div`
  width: 5px;
  height: 40px;
  border-left: 1px solid #7c7c7c;
`;

/* ---------- drawing ---------- */

const petals = Array.from({ length: 30 }, (_, i) => i * 12).filter(a => a < 230 || a > 310);
const date: [number, string][] = [[597, "1"], [622, "8"], [648, "4"], [672, "1"], [711, "-"], [752, "1"], [775, "8"], [801, "8"], [826, "2"]];
const holes = [
  [387, 254, 6], [505, 263, 6], [713, 263, 6], [920, 263, 6], [1039, 254, 6],
  [505, 387, 6], [920, 387, 6],
  [608, 736, 7], [818, 736, 7], [505, 778, 6], [920, 778, 6], [608, 820, 7], [818, 820, 7],
];
const pins = [[713, 472], [713, 513]];
const flange = "M437 297Q431 295 431.5 290L440.5 237Q441 233 437 232L366 220Q362 219 361.5 223L353.5 278Q353.5 280 355 282L411 348Q412.5 350 412.5 352V861";

const Numeral = styled.text`
  font-family: "Liberation Serif", serif;
  font-size: 20px;
  font-weight: 700;
  text-anchor: middle;
`;
const AxisName = styled.text`
  font-family: "Open Sans", sans-serif;
  font-weight: 300;
  font-size: 24px;
  text-anchor: middle;
`;

const Plate = () => (
  <Drawing role="img" aria-label="SEF-0017 sheet metal drawing">
    <g transform="translate(-70 -154)" fill="none" stroke="#fff" shapeRendering="crispEdges">
      <path d={flange} />
      <path d={flange} transform="translate(1425.5 0) scale(-1 1)" />
      <path d="M412.5 861Q412.5 867.5 418 867.5H1008Q1012.5 867.5 1012.5 861" />
      <path d="M445.5 867V240Q445.5 234.5 451 234.5H576Q580 234.5 580.5 239Q586 263.5 613 263.5H679Q685 263.5 686 257Q690 236.5 713 236.5Q736 236.5 740 257Q741 263.5 747 263.5H812Q840 263.5 845.5 239Q846 234.5 850 234.5H974Q980.5 234.5 980.5 240V867" />
      <path d="M437 297H989" strokeWidth="2" />
      <path d="M440.5 298V867M442.5 298V867M983.5 298V867M985.5 298V867" />
      {holes.map(([x, y, r]) => <circle key={`${x}-${y}`} cx={x} cy={y} r={r} shapeRendering="auto" />)}
      {pins.map(([x, y]) => <circle key={y} cx={x} cy={y} r="3.5" shapeRendering="auto" />)}
      {petals.map(a => (
        <path key={a} transform={`translate(713 581) rotate(${180 - a})`} d="M64 -3L113 -8.5Q118.5 -9 119.5 -4.5Q120.5 0 119.5 4.5Q118.5 9 113 8.5L64 3Q60 2.5 60 0Q60 -2.5 64 -3Z" />
      ))}
      <path transform="translate(713 581)" d="M-11.7 -12.4A12.1 12.1 0 1 1 11.7 -12.4A3.6 3.6 0 1 0 12.4 -11.7A12.1 12.1 0 1 1 12.4 11.7A3.6 3.6 0 1 0 11.7 12.4A12.1 12.1 0 1 1 -11.7 12.4A3.6 3.6 0 1 0 -12.4 11.7A12.1 12.1 0 1 1 -12.4 -11.7A3.6 3.6 0 1 0 -11.7 -12.4Z" />
      {date.map(([x, ch]) => <Numeral key={x} x={x} y={-380} transform="scale(1 -1)">{ch}</Numeral>)}
      <path d="M411.5 861.5H424.5V873.5H411.5ZM418.5 779V874M412 868H508M412.5 789L418.5 779L425 789M497 861L507 868L497 874" />
      <path d="M418 868H506" strokeWidth="2" />
      <AxisName x="418.5" y="775" fill="#fff" stroke="none">Y</AxisName>
      <AxisName x="520.5" y="876" fill="#fff" stroke="none">X</AxisName>
      <path d="M836 162.5H932" stroke="#e00000" />
      <path d="M884.5 155V211" stroke="#00d000" />
      <path d="M881.5 159.5H887.5V165.5H881.5Z" fill="#000" />
    </g>
  </Drawing>
);

const Balloon = () => (
  <svg width="24" height="34" viewBox="0 0 24 34" aria-label="CorelCAD">
    <path d="M12 1C4 1 0 6 0 12C0 19 6 25 9 28H15C18 25 24 19 24 12C24 6 20 1 12 1Z" fill="#707174" />
    <path d="M12 1C8 4 7 10 8 16L10 28H9C4 22 0 18 0 12C0 6 4 1 12 1Z" fill="#4b4c50" />
    <path d="M12 1C9 5 7 14 11 28H13C17 14 15 5 12 1Z" fill="#c9c9c9" />
    <path d="M12 1C10 5 8 9 9 18L13 12L14 4Z" fill="#efefef" />
    <path d="M5 3C2 8 3 16 9 28M19 3C22 8 21 16 15 28M8 2C5 8 6 18 10 28M16 2C19 8 18 18 14 28" fill="none" stroke="#2b2c2f" />
    <path d="M10 30H14V33H10Z" fill="#b00010" />
  </svg>
);

const modes: [string, number, boolean][] = [
  ["Snap", 39, false], ["Grid", 35, false], ["Ortho", 45, false], ["Polar", 41, true], ["ESnap", 46, true],
  ["ETrack", 46, true], ["QInput", 50, true], ["LWeight", 56, false], ["MODEL", 53, true], ["Dynamic CCS", 85, true],
];

const rail1 = ["erase", "delDup", "move", "mirror", "copy", "space", "grid", "rotate", "scale", "stretch", "transform", "chamfer", "fillet", "arcC", "arcC2", "join", "tee", "trim", "power", "corner", "hatchEdit", "shadow", "handPoly", "rotPoly", "handSpl", "frontSq", "frontA", "copyNode"];
const rail2 = ["line", "ray", "hexagon", "rect", "arc", "arc3", "circle", "ellipse", "ellArc", "points", "poly", "spline", "handSp2", "spiral", "split", "hatch", "attr", "region", "text", "textA", "cloudSet", "cloudRect", "cloudEll", "cloudFree", "cloudCvt"];

export default function App() {
  return (
    <Shell>
      <Global />
      <Header>
        <TopMark />
        <LogoBox><Balloon /></LogoBox>
        <HeaderBody>
          <TitleRow>
            <QuickBar>
              <Combo $w={181} $frame="#3a3b3f">
                <Select aria-label="Workspace"><option>Hamid</option></Select>
                <Caret />
              </Combo>
              {["newDoc", "open", "open2", "save", "print"].map(n => (
                <ToolButton key={n} $w={27} aria-label={n}><Icon name={n} size={18} /></ToolButton>
              ))}
              <ToolButton $w={24} aria-label="Undo"><Icon name="undo" size={18} /></ToolButton>
              <CaretButton aria-label="Undo list"><Caret color="#a0a0a0" w={4} /></CaretButton>
              <ToolButton $w={27} aria-label="Redo"><Icon name="redo" size={18} /></ToolButton>
              <CaretButton aria-label="Redo list"><Caret color="#a0a0a0" w={4} /></CaretButton>
              <CaretButton aria-label="Customize">
                <svg width="6" height="7" viewBox="0 0 6 7"><path d="M0 0H6V1H0ZM0 3H6L3 6Z" fill="#ddd" /></svg>
              </CaretButton>
            </QuickBar>
            <Title>CorelCAD 2021™ - [C:\Users\hamid\OneDrive\Desktop\SEF-0017.dxf]</Title>
            <WinButtons $gap={12}>
              <button aria-label="Minimize"><WinGlyph kind="min" /></button>
              <button aria-label="Restore"><WinGlyph kind="restore" /></button>
              <button aria-label="Close"><WinGlyph kind="close" /></button>
            </WinButtons>
          </TitleRow>
          <MenuRow>
            {["File", "Edit", "View", "Insert", "Format", "Dimension", "Draw", "Modify", "Constraints", "Tools", "Solids", "Window", "Help", "Plugins"].map(m => (
              <MenuItem key={m}>{m}</MenuItem>
            ))}
            <WinButtons $gap={10}>
              <button aria-label="Minimize drawing"><WinGlyph kind="min" size={8} /></button>
              <button aria-label="Restore drawing"><WinGlyph kind="restore" size={8} /></button>
              <button aria-label="Close drawing"><WinGlyph kind="close" size={8} /></button>
            </WinButtons>
          </MenuRow>
        </HeaderBody>
      </Header>

      <Bar $h={34}>
        <Group $first $tight><ToolButton $w={28} aria-label="Layers"><Icon name="layers" /></ToolButton></Group>
        <ComboSlot>
          <Combo $w={301}>
            <Disc color="#cfcfcf" /><Drop /><Unlock /><Disc color="#fff" />
            <Select aria-label="Active layer"><option>0</option></Select><Caret />
          </Combo>
        </ComboSlot>
        <ComboSlot>
          <Combo $w={299}><Select aria-label="Layer state"><option>Unsaved Layer State</option></Select><Caret /></Combo>
        </ComboSlot>
        <ComboSlot>
          <Combo $w={133}><Disc color="#fff" size={10} /><Select aria-label="Line color"><option>ByLayer</option></Select><Caret /></Combo>
        </ComboSlot>
        <ComboSlot>
          <Combo $w={133}><Select aria-label="Line style"><option>ByBlock</option></Select><Caret /></Combo>
        </ComboSlot>
        <ComboSlot>
          <Combo $w={133}>
            <svg width="32" height="1"><path d="M0 .5H32" stroke="#fff" /></svg>
            <Select aria-label="Line weight"><option>ByLayer</option></Select><Caret />
          </Combo>
        </ComboSlot>
        <ComboSlot>
          <Combo $w={133} $off><Select $off disabled aria-label="Print style"><option>ByColor</option></Select><Caret color="#66676a" /></Combo>
        </ComboSlot>
        <Group $first $tight><Tools names={["newDoc", "open", "save"]} /></Group>
        <Group><Tools names={["print", "printB", "preview", "printBrush"]} /></Group>
        <Group><Tools names={["cut", "copyDoc", "paste", "brush"]} /></Group>
        <Group>
          <Tools names={["undo"]} /><CaretButton aria-label="Undo steps"><Caret color="#a0a0a0" /></CaretButton>
          <Tools names={["redo"]} /><CaretButton aria-label="Redo steps"><Caret color="#a0a0a0" /></CaretButton>
        </Group>
        <Group><Tools names={["pan", "zoomDyn", "zoomPrev"]} /></Group>
        <Group><Tools names={["props", "folderZ"]} /></Group>
      </Bar>
      <Bar $h={34}>
        {group2.map((names, i) => (
          <Group key={names[0]} $first={i === 0} $tight={i === 0 || i === 2}><Tools names={names} /></Group>
        ))}
      </Bar>

      <Main>
        <Rail><Tools names={rail1} /></Rail>
        <Rail><Tools names={rail2} /></Rail>
        <Work>
          <Upper>
            <Doc>
              <DocTabs>
                <DocTab>
                  <span>SEF-0017.dxf</span>
                  <button aria-label="Close SEF-0017.dxf">
                    <svg width="14" height="14" stroke="#cfcfcf"><path d="M1 1L13 13M13 1L1 13" /></svg>
                  </button>
                </DocTab>
                <AddDoc aria-label="New drawing">
                  <svg width="13" height="13" stroke="#b0b0b0" strokeWidth="2"><path d="M6 0V12M0 6H12" /></svg>
                </AddDoc>
                <TabFill />
              </DocTabs>
              <Canvas><Plate /></Canvas>
              <SheetTabs>
                <SheetTab $w={61} $on>
                  <svg viewBox="0 0 61 16" preserveAspectRatio="none"><path d="M0 0L4 12Q5 15 8 15H52Q55 15 56 12L61 0" fill="#68696b" stroke="#111" /></svg>
                  <span>Model</span>
                </SheetTab>
                <SheetTab $w={67}>
                  <svg viewBox="0 0 67 16" preserveAspectRatio="none"><path d="M0 0L4 12Q5 15 8 15H58Q61 15 62 12L67 0" fill="none" stroke="#111" /></svg>
                  <span>Sheet1</span>
                </SheetTab>
                <AddSheet aria-label="Add sheet">
                  <svg width="13" height="13" stroke="#b0b0b0" strokeWidth="2"><path d="M6 0V12M0 6H12" /></svg>
                </AddSheet>
              </SheetTabs>
            </Doc>
            <Panel>
              <PanelBody>
                <PanelButton aria-label="Collapse"><Icon name="collapse" size={24} /></PanelButton>
                <PanelMain>
                  <ButtonRow>
                    {["layAdd", "layAddO", "layDel", "layMerge", "check"].map(n => (
                      <PanelButton key={n} aria-label={n}><Icon name={n} size={n === "check" ? 18 : 22} /></PanelButton>
                    ))}
                  </ButtonRow>
                  <ButtonRow>
                    {["layList", "layFind", "gear", "selCheck", "help"].map(n => (
                      <PanelButton key={n} aria-label={n}><Icon name={n} size={n === "gear" ? 16 : 22} /></PanelButton>
                    ))}
                  </ButtonRow>
                  <PanelField $frame="#66676a" readOnly aria-label="Layer summary" value="Active layer: 0. Total layer(s) defined: 5. Total layer(s) displayed: 5." />
                  <PanelField $frame="#000" aria-label="Filter" placeholder="Filter expression..." />
                  <TableBox>
                    <Table>
                      <thead>
                        <tr>
                          <Th $w={39}>St...</Th><Th $w={42}>Na...</Th><Th $w={40}>Sh...</Th><Th $w={40}>Fr...</Th><Th $w={40}>Lock</Th><Th $w={100} $left>LineColor</Th>
                        </tr>
                      </thead>
                      <tbody>
                        {layers.map((l, i) => {
                          const on = i === 0;
                          const tone = on ? "#95b6d6" : "#cfcfcf";
                          return (
                            <Tr key={l} $on={on}>
                              <Td>{on
                                ? <svg width="13" height="12"><path d="M0 4H6V0L13 6L6 12V8H0Z" fill={tone} /></svg>
                                : <Icon name="layRow" size={14} />}</Td>
                              <Td>{l}</Td>
                              <Td><Disc color={tone} /></Td>
                              <Td><Drop color={tone} /></Td>
                              <Td><Unlock color={tone} /></Td>
                              <Td><ColorCell><Disc color={on ? "#add3f5" : "#fff"} size={10} />White</ColorCell></Td>
                            </Tr>
                          );
                        })}
                      </tbody>
                    </Table>
                    <Scroll>
                      <svg width="5" height="10"><path d="M5 0V10L0 5Z" fill="#fff" /></svg>
                      <Thumb />
                      <svg width="5" height="10"><path d="M0 0V10L5 5Z" fill="#fff" /></svg>
                    </Scroll>
                  </TableBox>
                </PanelMain>
              </PanelBody>
              <PanelTitle>
                <button aria-label="Close panel"><WinGlyph kind="close" size={8} /></button>
                <button aria-label="Pin panel">
                  <svg width="10" height="14"><path d="M1 0H9V2H8V7L10 9H0L2 7V2H1ZM4 9H6V14H4Z" fill="#cfcfcf" /></svg>
                </button>
                <PanelName>Layers Manager</PanelName>
                <Icon name="layers" size={16} />
              </PanelTitle>
            </Panel>
            <SideTabs>
              <SideTab aria-label="Properties"><Icon name="props" size={18} /></SideTab>
              <SideTab $on aria-label="Layers"><Icon name="layers" size={18} /></SideTab>
            </SideTabs>
          </Upper>
          <Command>
            <CommandHead>
              Command Window
              <WinButtons $gap={12} $right={6}>
                <button aria-label="Restore command window"><WinGlyph kind="restore" /></button>
                <button aria-label="Close command window"><WinGlyph kind="close" size={9} /></button>
              </WinButtons>
            </CommandHead>
            <CommandLog />
            <CommandLine>Command:<CommandInput /></CommandLine>
          </Command>
        </Work>
      </Main>

      <Status>
        <Product>CorelCAD 2021™ x64</Product>
        <Modes>{modes.map(([m, w, on]) => <Mode key={m} $w={w} $on={on}>{m}</Mode>)}</Modes>
        <Combo $w={96} $off $frame="#18191b">
          <Select aria-label="Annotation scale"><option>Annotation</option></Select><Caret w={10} />
        </Combo>
        <Readout>(1:1)</Readout>
        <Readout>(388.7543,588.4458,0.0000)</Readout>
      </Status>

      <Taskbar>
        <TaskIcon $w={48} aria-label="Start">
          <svg width="16" height="16" fill="#fff"><path d="M0 2L7 1V7.5H0ZM8 1L16 0V7.5H8ZM0 8.5H7V15L0 14ZM8 8.5H16V16L8 15Z" /></svg>
        </TaskIcon>
        <TaskIcon $w={48} aria-label="Search">
          <svg width="16" height="16" fill="none" stroke="#fff" strokeWidth="1.5"><circle cx="10" cy="6" r="5" /><path d="M6.5 9.5L1 15" /></svg>
        </TaskIcon>
        <TaskIcon $w={51} aria-label="Task view">
          <svg width="17" height="16" fill="none" stroke="#fff"><path d="M0.5 0V2.5H11.5V0M0.5 16V13.5H11.5V16M0.5 4.5H11.5V11.5H0.5ZM15.5 0V16" /><path d="M14 4H17V7H14Z" fill="#fff" stroke="none" /></svg>
        </TaskIcon>
        <TaskApp $w={160} $on>
          <svg width="24" height="24" fill="none">
            <path d="M1 2H11Q19 3 19 9Q19 14 13 16L11 13Q15 11 15 8Q14 5 9 5Q5 5 2 8Z" fill="#e0440f" />
            <path d="M9 1L12 16M17 10L8 17" stroke="#c7c7c7" strokeWidth="3" />
            <circle cx="4.500" cy="18" r="3" stroke="#1483d8" strokeWidth="2" /><circle cx="11" cy="20.500" r="2.500" stroke="#1483d8" strokeWidth="2" />
          </svg>
          Snip &amp; Sketch
        </TaskApp>
        <TaskIcon $w={49} aria-label="Calculator">
          <svg width="18" height="24"><path d="M0 0H18V24H0Z" fill="#8595a5" /><path d="M2 2H16V6H2Z" fill="#35c6f4" /><path d="M2 9H5V12H2ZM7 9H10V12H7ZM12 9H16V12H12ZM2 14H5V17H2ZM7 14H10V17H7ZM2 19H5V22H2ZM7 19H10V22H7Z" fill="#eef3f7" /><path d="M12 14H16V22H12Z" fill="#0d4a8f" /></svg>
        </TaskIcon>
        <TaskIcon $w={49} aria-label="Notepad">
          <svg width="22" height="22"><path d="M7 1L19 2L22 20L17 21Z" fill="#c9d3d8" /><path d="M7 1L18 2L15 20L0 19Z" fill="#67b9c9" /><path d="M7 1L18 2L17 8L4 8Z" fill="#a5dde4" /></svg>
        </TaskIcon>
        <TaskIcon $w={54} aria-label="Remote desktop">
          <svg width="24" height="24"><path d="M4 1L22 1L21 16L6 14Z" fill="#d6d8e0" /><path d="M6 3L20 3L19 14L7 12Z" fill="#1735c8" /><ellipse cx="15" cy="20" rx="7" ry="3" fill="#c5c5c5" /><path d="M1 5H15V13H1Z" fill="#8fd0f5" /><path d="M2 7H14M2 9H14M2 11H14" stroke="#2a6fb8" strokeDasharray="2 1" /></svg>
        </TaskIcon>
        <TaskApp $w={152}>
          <svg width="24" height="24">
            <circle cx="12" cy="12" r="11" fill="#f9c518" />
            <path d="M12 12L2.5 6.5A11 11 0 0 1 21.5 6.5L12 7Z" fill="#e6402e" />
            <path d="M2.5 6.5A11 11 0 0 0 11 23L16 15L7 14Z" fill="#2f9e4c" />
            <circle cx="12" cy="12" r="5.5" fill="#fff" /><circle cx="12" cy="12" r="4.5" fill="#3e7de8" />
          </svg>
          F360 DXF export fro...
        </TaskApp>
        <TaskApp $w={152}>
          <svg width="24" height="24"><rect width="24" height="24" rx="5" fill="#7d0010" /><path d="M0 10L24 4V19L12 24H5Q0 24 0 19Z" fill="#a10d19" /><path d="M12 2V9M12 17V22M2 13H8M16 13H22M8.5 9.5H15.5V16.5H8.5Z" stroke="#e8c9c9" fill="none" /><path d="M11 12H13V14H11Z" fill="#fff" /></svg>
          CorelCAD 2021™ - [...
        </TaskApp>
        <TaskApp $w={152}>
          <svg width="24" height="24"><path d="M0 0H24V24H0Z" fill="#f8dcc4" /><path d="M7 3H18V7H12V10H17V14H12V20H7Z" fill="#d9842f" /><path d="M7 3L10 5V22L7 20Z" fill="#a8591a" /></svg>
          Autodesk Fusion 360
        </TaskApp>
        <TaskApp $w={152}>
          <svg width="24" height="24"><path d="M0 0H24V24H0Z" fill="#fae100" /><ellipse cx="12" cy="11" rx="9" ry="7" fill="#371d1e" /><path d="M7 15L7 21L13 17Z" fill="#371d1e" /><text x="12" y="13" fontSize="6" fontWeight="700" textAnchor="middle" fill="#fae100">TALK</text></svg>
          KakaoTalk
        </TaskApp>
        <Tray>
          <TraySlot $w={32} aria-label="T app">
            <svg width="26" height="26"><circle cx="13" cy="13" r="12.5" fill="#c01220" /><path d="M3 7Q8 7 13 10Q18 7 23 7L21 9Q17 10 14 12V24H12V12Q9 10 5 9Z" fill="#33181a" /></svg>
          </TraySlot>
          <TraySlot $w={28} aria-label="Show hidden icons"><svg width="12" height="7" fill="none" stroke="#fff"><path d="M0.5 6.5L6 1L11.5 6.5" /></svg></TraySlot>
          <TraySlot $w={22} aria-label="Network"><svg width="14" height="14" fill="none" stroke="#ddd"><path d="M1 13Q1 2 13 2M4 13Q4 5 13 5M7 13Q7 8 13 8" /><circle cx="11.5" cy="12" r="1.5" fill="#fff" stroke="none" /></svg></TraySlot>
          <TraySlot $w={24} aria-label="Battery"><svg width="17" height="14" fill="none" stroke="#fff"><path d="M5.5 4.5H14.5V11.5H3.5V8M16 6V10M1 1V4H5V1M3 4V8" /><path d="M8 6H13V10H8Z" fill="#fff" stroke="none" /></svg></TraySlot>
          <TraySlot $w={24} aria-label="Volume"><svg width="17" height="14" fill="none" stroke="#fff"><path d="M0.5 5V9H3L7 13V1L3 5ZM9 5Q10.5 7 9 9M11.5 3Q14 7 11.5 11" /><path d="M14 1Q17.5 7 14 13" stroke="#888" /></svg></TraySlot>
          <TraySlot $w={32} aria-label="Ink"><svg width="17" height="16" fill="none" stroke="#fff"><path d="M5 10L11 2Q13 0 14 2L8 12L5 13ZM6 9Q1 9 1 12Q1 16 5 15Q9 14 9 11M12 4L15 6Q15 10 11 9" /></svg></TraySlot>
          <TraySlot $w={36}>ENG</TraySlot>
          <Clock>8:10 PM<br />2022-02-21</Clock>
          <TraySlot $w={38} aria-label="Notifications"><svg width="17" height="16" fill="none" stroke="#fff"><path d="M0.5 0.5H16.5V12.5H11L8.5 15L6 12.5H0.5Z" /></svg></TraySlot>
          <TraySlot $w={8} aria-label="More" />
          <Edge />
        </Tray>
      </Taskbar>
    </Shell>
  );
}
